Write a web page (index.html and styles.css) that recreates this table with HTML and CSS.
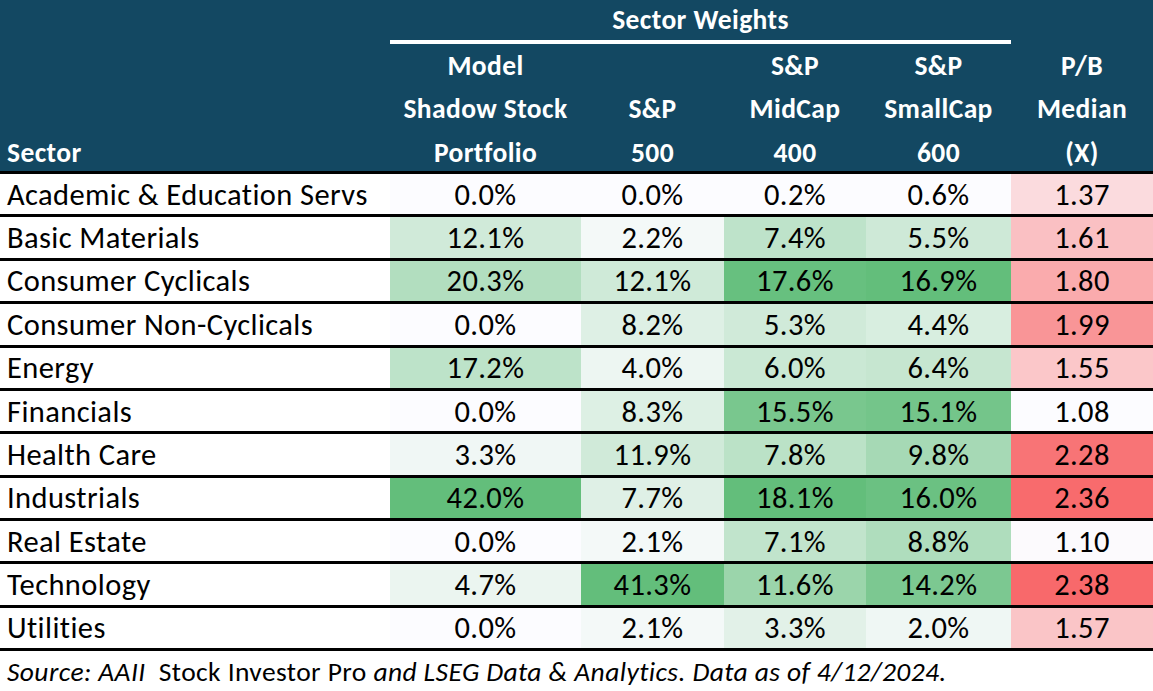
FILE: index.html
```html
<!DOCTYPE html>
<html lang="en">
<head>
<meta charset="utf-8">
<title>Sector Weights</title>
<link rel="stylesheet" href="styles.css">
</head>
<body>
<div class="sheet">
  <div class="head">
    <div class="group-row">
      <div class="cell-blank"></div>
      <div class="group-title">Sector Weights</div>
      <div class="cell-blank"></div>
    </div>
    <div class="col-row">
      <div class="hcell hcell-left"><span>Sector</span></div>
      <div class="hcell"><span>Model</span><span>Shadow Stock</span><span>Portfolio</span></div>
      <div class="hcell"><span>S&amp;P</span><span>500</span></div>
      <div class="hcell"><span>S&amp;P</span><span>MidCap</span><span>400</span></div>
      <div class="hcell"><span>S&amp;P</span><span>SmallCap</span><span>600</span></div>
      <div class="hcell"><span>P/B</span><span>Median</span><span>(X)</span></div>
    </div>
  </div>
  <div class="body">
    <div class="row"><div class="c name">Academic &amp; Education Servs</div><div class="c" style="background:rgb(252,252,255)">0.0%</div><div class="c" style="background:rgb(252,252,255)">0.0%</div><div class="c" style="background:rgb(252,252,255)">0.2%</div><div class="c" style="background:rgb(252,252,255)">0.6%</div><div class="c" style="background:rgb(251,219,222)">1.37</div></div>
    <div class="row"><div class="c name">Basic Materials</div><div class="c" style="background:rgb(208,234,217)">12.1%</div><div class="c" style="background:rgb(244,249,248)">2.2%</div><div class="c" style="background:rgb(190,227,202)">7.4%</div><div class="c" style="background:rgb(206,233,215)">5.5%</div><div class="c" style="background:rgb(250,192,195)">1.61</div></div>
    <div class="row"><div class="c name">Consumer Cyclicals</div><div class="c" style="background:rgb(178,222,191)">20.3%</div><div class="c" style="background:rgb(207,234,216)">12.1%</div><div class="c" style="background:rgb(103,192,127)">17.6%</div><div class="c" style="background:rgb(99,190,123)">16.9%</div><div class="c" style="background:rgb(250,171,173)">1.80</div></div>
    <div class="row"><div class="c name">Consumer Non-Cyclicals</div><div class="c" style="background:rgb(252,252,255)">0.0%</div><div class="c" style="background:rgb(222,240,229)">8.2%</div><div class="c" style="background:rgb(208,234,217)">5.3%</div><div class="c" style="background:rgb(216,238,224)">4.4%</div><div class="c" style="background:rgb(249,149,151)">1.99</div></div>
    <div class="row"><div class="c name">Energy</div><div class="c" style="background:rgb(189,227,201)">17.2%</div><div class="c" style="background:rgb(237,246,242)">4.0%</div><div class="c" style="background:rgb(202,232,212)">6.0%</div><div class="c" style="background:rgb(198,230,208)">6.4%</div><div class="c" style="background:rgb(251,199,201)">1.55</div></div>
    <div class="row"><div class="c name">Financials</div><div class="c" style="background:rgb(252,252,255)">0.0%</div><div class="c" style="background:rgb(221,240,228)">8.3%</div><div class="c" style="background:rgb(121,199,142)">15.5%</div><div class="c" style="background:rgb(116,197,138)">15.1%</div><div class="c" style="background:rgb(252,252,255)">1.08</div></div>
    <div class="row"><div class="c name">Health Care</div><div class="c" style="background:rgb(240,247,245)">3.3%</div><div class="c" style="background:rgb(208,234,217)">11.9%</div><div class="c" style="background:rgb(187,226,199)">7.8%</div><div class="c" style="background:rgb(166,217,181)">9.8%</div><div class="c" style="background:rgb(248,116,118)">2.28</div></div>
    <div class="row"><div class="c name">Industrials</div><div class="c" style="background:rgb(99,190,123)">42.0%</div><div class="c" style="background:rgb(223,240,230)">7.7%</div><div class="c" style="background:rgb(99,190,123)">18.1%</div><div class="c" style="background:rgb(107,193,130)">16.0%</div><div class="c" style="background:rgb(248,107,109)">2.36</div></div>
    <div class="row"><div class="c name">Real Estate</div><div class="c" style="background:rgb(252,252,255)">0.0%</div><div class="c" style="background:rgb(244,249,248)">2.1%</div><div class="c" style="background:rgb(193,228,204)">7.1%</div><div class="c" style="background:rgb(175,221,189)">8.8%</div><div class="c" style="background:rgb(252,250,253)">1.10</div></div>
    <div class="row"><div class="c name">Technology</div><div class="c" style="background:rgb(235,245,240)">4.7%</div><div class="c" style="background:rgb(99,190,123)">41.3%</div><div class="c" style="background:rgb(155,213,171)">11.6%</div><div class="c" style="background:rgb(124,200,145)">14.2%</div><div class="c" style="background:rgb(248,105,107)">2.38</div></div>
    <div class="row"><div class="c name">Utilities</div><div class="c" style="background:rgb(252,252,255)">0.0%</div><div class="c" style="background:rgb(244,249,248)">2.1%</div><div class="c" style="background:rgb(226,241,232)">3.3%</div><div class="c" style="background:rgb(239,247,244)">2.0%</div><div class="c" style="background:rgb(250,197,199)">1.57</div></div>
  </div>
  <p class="source"><em>Source: AAII</em>&nbsp; Stock Investor Pro <em>and LSEG Data &amp; Analytics. Data as of 4/12/2024.</em></p>
</div>
</body>
</html>
```

FILE: styles.css
```css
html, body {
  margin: 0;
  padding: 0;
  background: #ffffff;
}

.sheet {
  width: 1153px;
  font-family: Carlito, Calibri, Lato, "Noto Sans", sans-serif;
  color: #000000;
  letter-spacing: 0.4px;
}

.head {
  background: #134862;
  color: #ffffff;
  font-weight: 700;
  font-size: 27.5px;
  border-bottom: 3px solid #000000;
}

.group-row,
.col-row,
.row {
  display: grid;
  grid-template-columns: 390px 191px 143px 142px 145px 142px;
}

.group-row {
  height: 44px;
}

.group-title {
  grid-column: span 4;
  height: 40px;
  line-height: 40px;
  text-align: center;
  border-bottom: 4px solid #ffffff;
}

.col-row {
  height: 127px;
}

.hcell {
  display: flex;
  flex-direction: column;
  justify-content: flex-end;
  align-items: center;
  line-height: 43.3px;
  margin-bottom: -2.5px;
  white-space: nowrap;
}

.hcell-left {
  align-items: flex-start;
  padding-left: 7px;
}

.row {
  height: 40.39px;
  border-bottom: 3px solid #000000;
  font-size: 30.5px;
}

.c {
  display: flex;
  align-items: center;
  justify-content: center;
  white-space: nowrap;
}

.c.name {
  justify-content: flex-start;
  padding-left: 7px;
  background: #ffffff;
}

.source {
  margin: 0;
  padding-left: 7px;
  height: 40px;
  line-height: 42px;
  font-size: 27.5px;
  white-space: nowrap;
}

.source em {
  font-style: italic;
}
```
